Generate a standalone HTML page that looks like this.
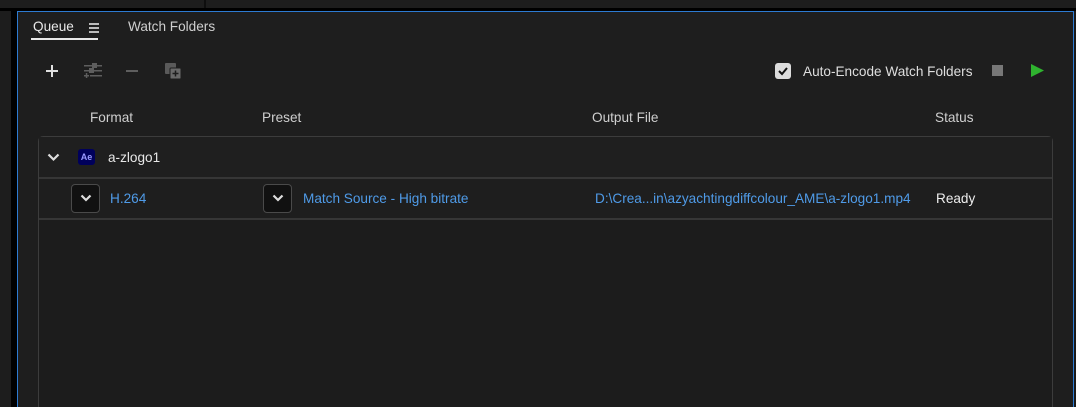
<!DOCTYPE html>
<html><head><style>
*{margin:0;padding:0;box-sizing:border-box}
html,body{width:1076px;height:407px;overflow:hidden}
body{background:#1d1d1d;position:relative;font-family:"Liberation Sans",sans-serif;font-size:13.6px;color:#d6d6d6}
.a{position:absolute}
.blue{color:#4f9be8}
.dd{position:absolute;width:29px;height:29px;border:1px solid #4a4a4a;border-radius:4px;background:#111}
.dd svg{position:absolute;left:8px;top:9px}
</style></head><body>
<div class="a" style="left:0;top:0;width:1076px;height:8px;background:#1d1d1d"></div>
<div class="a" style="left:204px;top:0;width:2px;height:8px;background:#0e0e0e"></div>
<div class="a" style="left:0;top:8px;width:1076px;height:3px;background:#000"></div>
<div class="a" style="left:11px;top:8px;width:6px;height:399px;background:#000"></div>
<div class="a" style="left:17px;top:11px;width:1057px;height:396px;background:#1e1e1e;border:1px solid #2d7bd2;border-bottom:none"></div>
<div class="a" style="left:1074px;top:11px;width:2px;height:396px;background:#1a1a1a"></div>

<div class="a" style="left:33px;top:19px;color:#e8e8e8">Queue</div>
<div class="a" style="left:31px;top:38px;width:67px;height:2px;background:#e8e8e8"></div>
<div class="a" style="left:89px;top:23px;width:10px;height:2px;background:#bbb;box-shadow:0 4px 0 #bbb,0 8px 0 #bbb"></div>
<div class="a" style="left:128px;top:19px;color:#cfcfcf">Watch Folders</div>

<div class="a" style="left:46px;top:70px;width:12px;height:2px;background:#e0e0e0"></div>
<div class="a" style="left:51px;top:65px;width:2px;height:12px;background:#e0e0e0"></div>
<svg class="a" style="left:84px;top:63px" width="18" height="16"><g fill="#5e5e5e"><rect x="0" y="2" width="18" height="1.5"/><rect x="8" y="0" width="5" height="5"/><rect x="0" y="7" width="18" height="1.5"/><rect x="5" y="5" width="5" height="5"/><rect x="6" y="12" width="12" height="1.5"/><rect x="0" y="12" width="5" height="1.5"/><rect x="1.8" y="10" width="1.5" height="5"/></g></svg>
<div class="a" style="left:126px;top:70px;width:12px;height:2px;background:#5e5e5e"></div>
<svg class="a" style="left:165px;top:63px" width="17" height="17"><rect x="0" y="0" width="11" height="11" rx="1" fill="#5a5a5a"/><rect x="5" y="5" width="11" height="11" rx="1" fill="#6a6a6a" stroke="#1e1e1e"/><path d="M10.5 7.5v6M7.5 10.5h6" stroke="#1e1e1e" stroke-width="1.5"/></svg>

<div class="a" style="left:775px;top:63px;width:16px;height:16px;background:#dcdcdc;border-radius:3px"></div>
<svg class="a" style="left:777px;top:65px" width="12" height="12"><path d="M2 6l3 3 5-6" stroke="#111" stroke-width="2" fill="none"/></svg>
<div class="a" style="left:803px;top:64px;color:#dedede">Auto-Encode Watch Folders</div>
<div class="a" style="left:992px;top:65px;width:11px;height:11px;background:#777"></div>
<svg class="a" style="left:1031px;top:64px" width="13" height="13"><path d="M0 0L13 6.5L0 13Z" fill="#2fb32f"/></svg>

<div class="a" style="left:90px;top:110px;color:#cfcfcf">Format</div>
<div class="a" style="left:262px;top:110px;color:#cfcfcf">Preset</div>
<div class="a" style="left:592px;top:110px;color:#cfcfcf">Output File</div>
<div class="a" style="left:935px;top:110px;color:#cfcfcf">Status</div>

<div class="a" style="left:38px;top:136px;width:1015px;height:271px;border:1px solid #3c3c3c;border-bottom:none;border-radius:5px 5px 0 0;background:#1c1c1c"></div>
<div class="a" style="left:39px;top:137px;width:1013px;height:41px;background:#1f1f1f"></div>
<div class="a" style="left:39px;top:177px;width:1013px;height:2px;background:#363636"></div>
<div class="a" style="left:39px;top:179px;width:1013px;height:39px;background:#1e1e1e"></div>
<div class="a" style="left:39px;top:218px;width:1013px;height:2px;background:#363636"></div>

<svg class="a" style="left:47px;top:153px" width="13" height="9"><path d="M1.5 1.5l5 5 5-5" stroke="#ddd" stroke-width="2.2" fill="none"/></svg>
<div class="a" style="left:78px;top:149px;width:17px;height:16px;background:#00005b;border-radius:3px;color:#9999ff;font-size:9px;font-weight:bold;text-align:center;line-height:16px">Ae</div>
<div class="a" style="left:108px;top:150px;color:#e8e8e8">a-zlogo1</div>

<div class="dd" style="left:71px;top:184px"><svg width="12" height="9"><path d="M1.5 1.5l4.5 4.5 4.5-4.5" stroke="#ddd" stroke-width="2.2" fill="none"/></svg></div>
<div class="a blue" style="left:110px;top:191px">H.264</div>
<div class="dd" style="left:263px;top:184px"><svg width="12" height="9"><path d="M1.5 1.5l4.5 4.5 4.5-4.5" stroke="#ddd" stroke-width="2.2" fill="none"/></svg></div>
<div class="a blue" style="left:303px;top:191px">Match Source - High bitrate</div>
<div class="a blue" style="left:595px;top:191px">D:\Crea...in\azyachtingdiffcolour_AME\a-zlogo1.mp4</div>
<div class="a" style="left:936px;top:191px;color:#eee">Ready</div>
</body></html>
